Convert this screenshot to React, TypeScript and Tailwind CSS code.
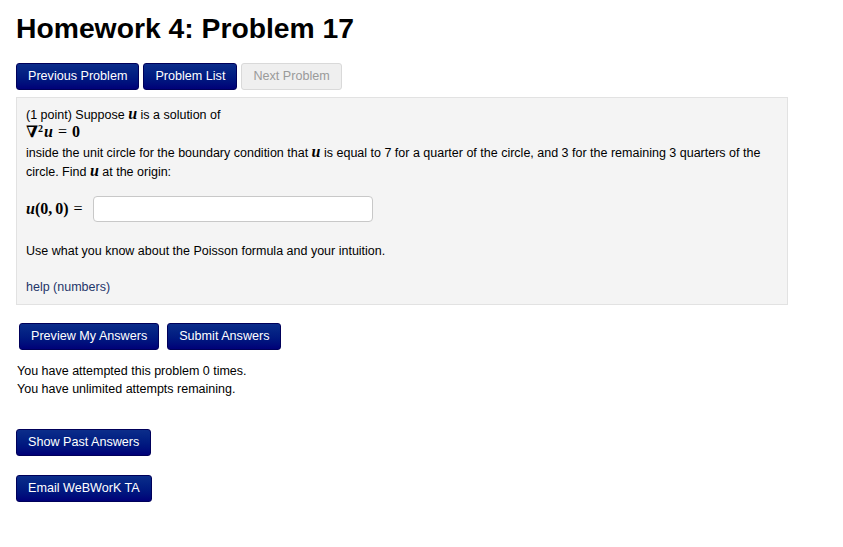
import React from "react";

const sans = { fontFamily: '"Liberation Sans", Arial, sans-serif' };

function NavyButton({ children, className = "" }: { children: React.ReactNode; className?: string }) {
  return (
    <button
      className={
        "h-[27px] px-[11px] rounded-[3px] border border-[#00005a] bg-gradient-to-b from-[#0c2d8a] to-[#000078] text-white text-[12.6px] leading-none whitespace-nowrap " +
        className
      }
    >
      {children}
    </button>
  );
}

function M({ children }: { children: React.ReactNode }) {
  return (
    <span className="font-bold text-[16px] leading-none" style={{ fontFamily: '"Liberation Serif", "DejaVu Serif", serif' }}>
      {children}
    </span>
  );
}

function U() {
  return <M><i>u</i></M>;
}

export default function App() {
  return (
    <div className="min-h-[547px] bg-white text-black pl-4 pt-[12px]" style={sans}>
      <h1 className="text-[28.3px] leading-[32px] font-bold">Homework 4: Problem 17</h1>

      <div className="flex gap-[4px] mt-[19px]">
        <NavyButton>Previous Problem</NavyButton>
        <NavyButton>Problem List</NavyButton>
        <button className="h-[27px] px-[11px] rounded-[3px] border border-[#d9d9d9] bg-[#efefef] text-[#9a9a9a] text-[12.6px] leading-none whitespace-nowrap">
          Next Problem
        </button>
      </div>

      <div className="w-[772px] mt-[7px] border border-[#e2e2e2] bg-[#f4f4f4] pl-[9px] pr-[9px] pt-[8px] pb-[8px] text-[12.5px] leading-[18px]">
        <div className="h-[18px]">
          (1 point) Suppose <U /> is a solution of
        </div>
        <div className="h-[18px] leading-[18px]">
          <M>
            ∇<sup className="text-[10px]">2</sup>
            <i className="ml-[1px]">u</i>
            <span className="font-normal mx-[5px]">=</span>0
          </M>
        </div>
        <div className="leading-[17.5px] mt-[2px]">
          inside the unit circle for the boundary condition that <U /> is equal to 7 for a quarter of the circle, and 3 for the
          remaining 3 quarters of the circle. Find <U /> at the origin:
        </div>
        <div className="flex items-center mt-[15px] h-[26px]">
          <M>
            <i>u</i>(0,<span className="ml-[3px]">0)</span>
            <span className="font-normal ml-[5px]">=</span>
          </M>
          <input
            className="ml-[10px] w-[280px] h-[26px] bg-white border border-[#c8c8c8] rounded-[4px] outline-none"
            type="text"
          />
        </div>
        <div className="mt-[20px] h-[18px]">Use what you know about the Poisson formula and your intuition.</div>
        <div className="mt-[18px] h-[18px] text-[#1f3569]">help (numbers)</div>
      </div>

      <div className="flex gap-[8px] mt-[18px] ml-[3px]">
        <NavyButton>Preview My Answers</NavyButton>
        <NavyButton>Submit Answers</NavyButton>
      </div>

      <div className="mt-[12px] text-[12.5px] leading-[18px] ml-[1px]">
        <div>You have attempted this problem 0 times.</div>
        <div>You have unlimited attempts remaining.</div>
      </div>

      <div className="mt-[31px]">
        <NavyButton>Show Past Answers</NavyButton>
      </div>
      <div className="mt-[19px]">
        <NavyButton>Email WeBWorK TA</NavyButton>
      </div>
    </div>
  );
}
